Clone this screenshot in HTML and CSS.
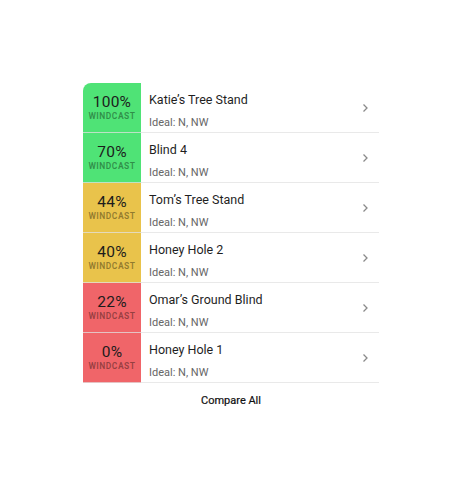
FILE: index.html
```html
<!DOCTYPE html>
<html>
<head>
<meta charset="utf-8">
<link rel="stylesheet" href="styles.css">
</head>
<body>
<div class="wrap">
  <div class="list">
    <div class="row">
      <div class="badge green"><div class="pct">100%</div><div class="lbl">WINDCAST</div></div>
      <div class="info"><div class="title">Katie’s Tree Stand</div><div class="sub">Ideal: N, NW</div></div>
      <svg class="chev" viewBox="0 0 8 10" width="8" height="10"><path d="M2.5 1.5 L6 5 L2.5 8.5" fill="none" stroke="#8a8a8a" stroke-width="1.3"/></svg>
    </div>
    <div class="row">
      <div class="badge green"><div class="pct">70%</div><div class="lbl">WINDCAST</div></div>
      <div class="info"><div class="title">Blind 4</div><div class="sub">Ideal: N, NW</div></div>
      <svg class="chev" viewBox="0 0 8 10" width="8" height="10"><path d="M2.5 1.5 L6 5 L2.5 8.5" fill="none" stroke="#8a8a8a" stroke-width="1.3"/></svg>
    </div>
    <div class="row">
      <div class="badge yellow"><div class="pct">44%</div><div class="lbl">WINDCAST</div></div>
      <div class="info"><div class="title">Tom’s Tree Stand</div><div class="sub">Ideal: N, NW</div></div>
      <svg class="chev" viewBox="0 0 8 10" width="8" height="10"><path d="M2.5 1.5 L6 5 L2.5 8.5" fill="none" stroke="#8a8a8a" stroke-width="1.3"/></svg>
    </div>
    <div class="row">
      <div class="badge yellow"><div class="pct">40%</div><div class="lbl">WINDCAST</div></div>
      <div class="info"><div class="title">Honey Hole 2</div><div class="sub">Ideal: N, NW</div></div>
      <svg class="chev" viewBox="0 0 8 10" width="8" height="10"><path d="M2.5 1.5 L6 5 L2.5 8.5" fill="none" stroke="#8a8a8a" stroke-width="1.3"/></svg>
    </div>
    <div class="row">
      <div class="badge red"><div class="pct">22%</div><div class="lbl">WINDCAST</div></div>
      <div class="info"><div class="title">Omar’s Ground Blind</div><div class="sub">Ideal: N, NW</div></div>
      <svg class="chev" viewBox="0 0 8 10" width="8" height="10"><path d="M2.5 1.5 L6 5 L2.5 8.5" fill="none" stroke="#8a8a8a" stroke-width="1.3"/></svg>
    </div>
    <div class="row">
      <div class="badge red"><div class="pct">0%</div><div class="lbl">WINDCAST</div></div>
      <div class="info"><div class="title">Honey Hole 1</div><div class="sub">Ideal: N, NW</div></div>
      <svg class="chev" viewBox="0 0 8 10" width="8" height="10"><path d="M2.5 1.5 L6 5 L2.5 8.5" fill="none" stroke="#8a8a8a" stroke-width="1.3"/></svg>
    </div>
  </div>
  <div class="compare">Compare All</div>
</div>
</body>
</html>
```

FILE: styles.css
```css
html, body {
  margin: 0;
  padding: 0;
  background: #fff;
  font-family: Roboto, "Liberation Sans", sans-serif;
}
.wrap {
  padding: 83px 0 0 83px;
  width: 296px;
}
.list {
  display: flex;
  flex-direction: column;
}
.row {
  display: flex;
  align-items: stretch;
  height: 50px;
  position: relative;
}
.row::after {
  content: "";
  position: absolute;
  left: 0;
  right: 0;
  bottom: 0;
  height: 1px;
  background: rgba(225, 225, 225, 0.75);
}
.row:first-child .badge {
  border-top-left-radius: 8px;
}
.badge {
  width: 58px;
  display: flex;
  flex-direction: column;
  align-items: center;
  justify-content: center;
  padding-bottom: 1px;
  box-sizing: border-box;
}
.green { background: #4fe376; }
.yellow { background: #e9c34b; }
.red { background: #f06569; }
.pct {
  font-size: 15.5px;
  color: #1c1c1c;
  line-height: 17px;
  letter-spacing: 0.2px;
}
.lbl {
  font-size: 8.5px;
  font-weight: 700;
  letter-spacing: 0.5px;
  color: rgba(0, 0, 0, 0.38);
  line-height: 11px;
}
.info {
  flex: 1;
  display: flex;
  flex-direction: column;
  justify-content: center;
  padding-left: 8px;
  padding-top: 4px;
  gap: 9px;
}
.title {
  font-size: 12.5px;
  color: #1f1f1f;
  line-height: 15px;
}
.sub {
  font-size: 11px;
  color: #666;
  line-height: 13px;
}
.chev {
  align-self: center;
  margin-right: 10px;
}
.compare {
  text-align: center;
  font-size: 11px;
  font-weight: 400;
  color: #111;
  margin-top: 11px;
  -webkit-text-stroke: 0.2px #111;
}
```
